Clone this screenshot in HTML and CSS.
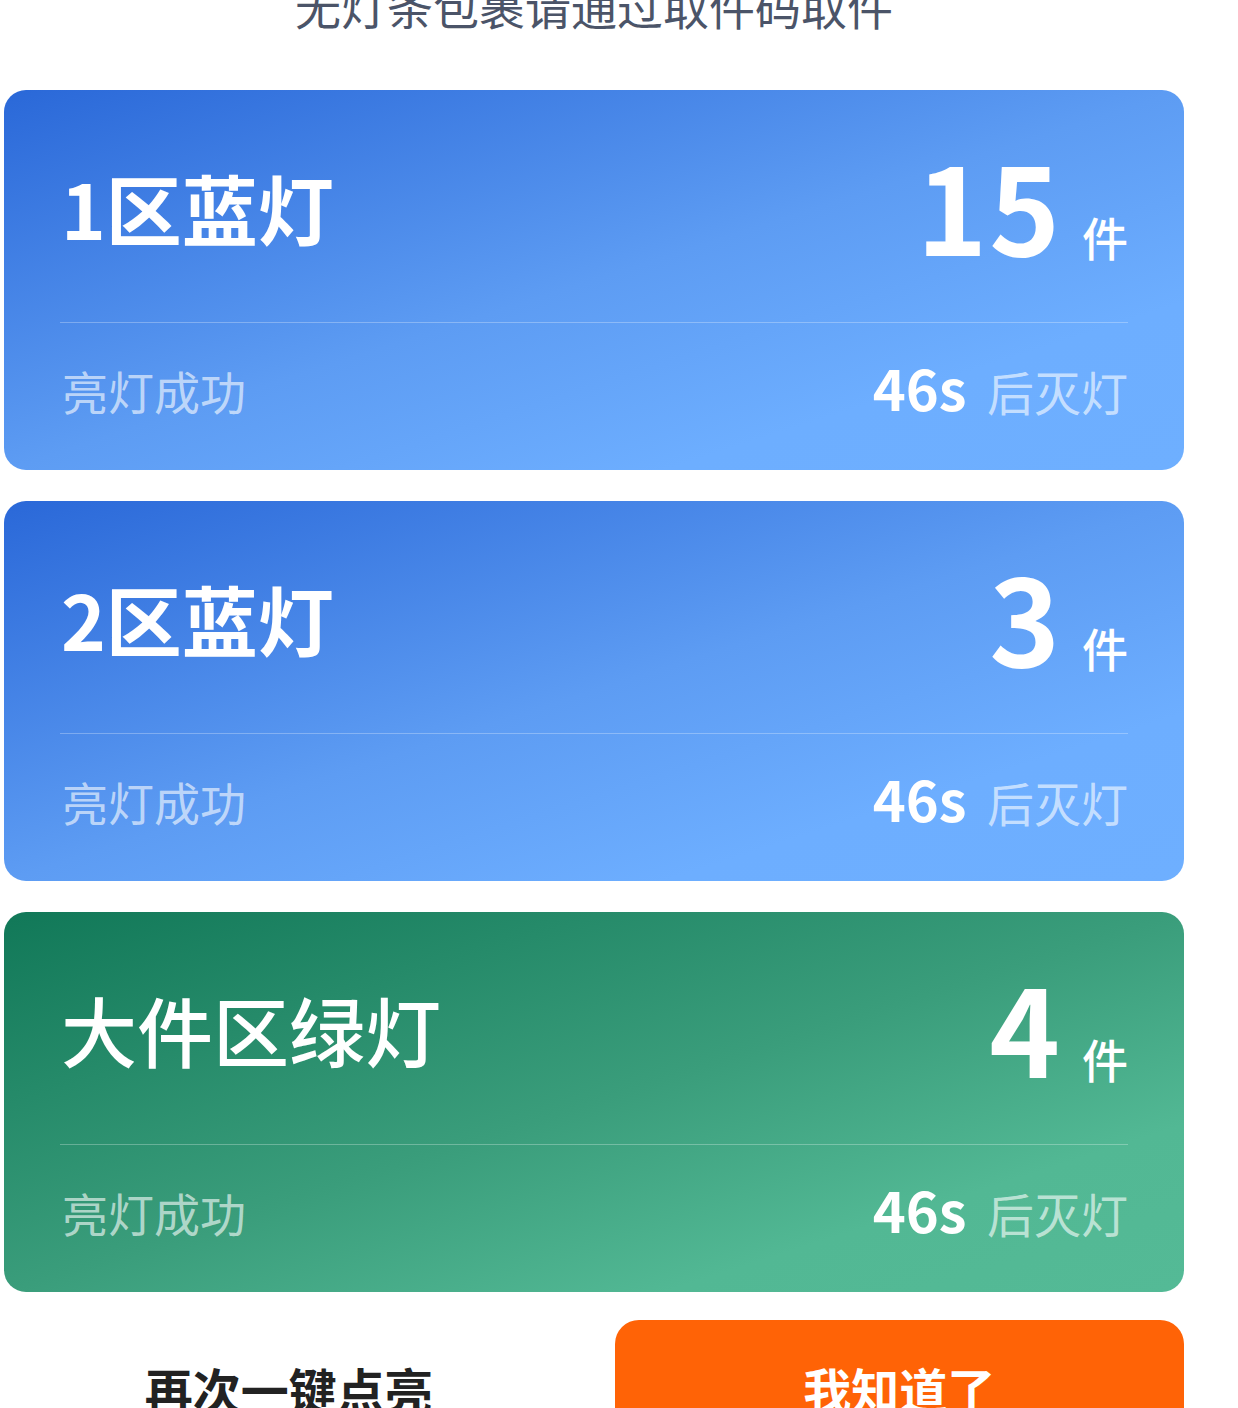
FILE: index.html
```html
<!DOCTYPE html>
<html lang="zh-CN">
<head>
  <meta charset="UTF-8" />
  <meta name="viewport" content="width=device-width, initial-scale=1.0"/>
  <title>亮灯结果</title>
  <link rel="stylesheet" href="styles.css">
</head>
<body>
  <div class="sheet">
    <p class="tip">无灯条包裹请通过取件码取件</p>

    <div class="card blue">
      <div class="card-top">
        <span class="zone">1区蓝灯</span>
        <span class="count"><b>15</b><i>件</i></span>
      </div>
      <div class="card-bottom">
        <span class="state">亮灯成功</span>
        <span class="timer"><b>46s</b> 后灭灯</span>
      </div>
    </div>

    <div class="card blue">
      <div class="card-top">
        <span class="zone">2区蓝灯</span>
        <span class="count"><b>3</b><i>件</i></span>
      </div>
      <div class="card-bottom">
        <span class="state">亮灯成功</span>
        <span class="timer"><b>46s</b> 后灭灯</span>
      </div>
    </div>

    <div class="card green">
      <div class="card-top">
        <span class="zone light">大件区绿灯</span>
        <span class="count"><b>4</b><i>件</i></span>
      </div>
      <div class="card-bottom">
        <span class="state">亮灯成功</span>
        <span class="timer"><b>46s</b> 后灭灯</span>
      </div>
    </div>

    <div class="actions">
      <button class="btn ghost">再次一键点亮</button>
      <button class="btn primary">我知道了</button>
    </div>
  </div>
</body>
</html>
```

FILE: styles.css
```css
body {
  margin: 0;
  background-color: #ffffff;
  font-family: "Noto Sans CJK SC", "Noto Sans", sans-serif;
  overflow: hidden;
}

.sheet {
  width: 1180px;
  padding-left: 4px;
}

.tip {
  margin: -18px 0 62px;
  font-size: 46px;
  line-height: 46px;
  text-align: center;
  color: #4b5468;
}

.card {
  height: 380px;
  border-radius: 22px;
  padding: 0 56px;
  margin-bottom: 31px;
  color: #ffffff;
  box-sizing: border-box;
}

.blue {
  background: linear-gradient(to bottom right, #2a68d8 0%, #5d9cf3 50%, #6daeff 78%, #6eafff 100%);
}

.green {
  background: linear-gradient(to bottom right, #117858 0%, #3a9d7b 50%, #52b894 78%, #54ba96 100%);
  margin-bottom: 28px;
}

.card-top {
  height: 232px;
  display: flex;
  justify-content: space-between;
  align-items: center;
  border-bottom: 1px solid rgba(255, 255, 255, 0.28);
}

.zone {
  font-size: 76px;
  font-weight: 700;
  line-height: 1;
  margin-top: 2px;
  margin-left: 1px;
}

.zone.light {
  font-weight: 500;
}

.count {
  display: flex;
  align-items: baseline;
}

.count b {
  font-size: 120px;
  font-weight: 700;
  line-height: 1;
  letter-spacing: 2px;
}

.count i {
  font-style: normal;
  font-size: 46px;
  font-weight: 500;
  margin-left: 20px;
}

.card-bottom {
  height: 138px;
  display: flex;
  justify-content: space-between;
  align-items: center;
  font-size: 46px;
  color: rgba(255, 255, 255, 0.62);
  padding-bottom: 4px;
  box-sizing: border-box;
}

.state {
  margin-left: 2px;
}

.timer {
  font-size: 47px;
  margin-bottom: 8px;
}

.timer b {
  color: #ffffff;
  font-size: 56px;
  font-weight: 700;
  margin-right: 10px;
}

.actions {
  display: grid;
  grid-template-columns: 1fr 1fr;
  gap: 41px;
}

.btn {
  height: 136px;
  border: none;
  border-radius: 24px;
  font-family: inherit;
  font-size: 48px;
  font-weight: 700;
  cursor: pointer;
}

.ghost {
  background-color: #ffffff;
  color: #222222;
}

.primary {
  background-color: #ff6306;
  color: #ffffff;
}
```
